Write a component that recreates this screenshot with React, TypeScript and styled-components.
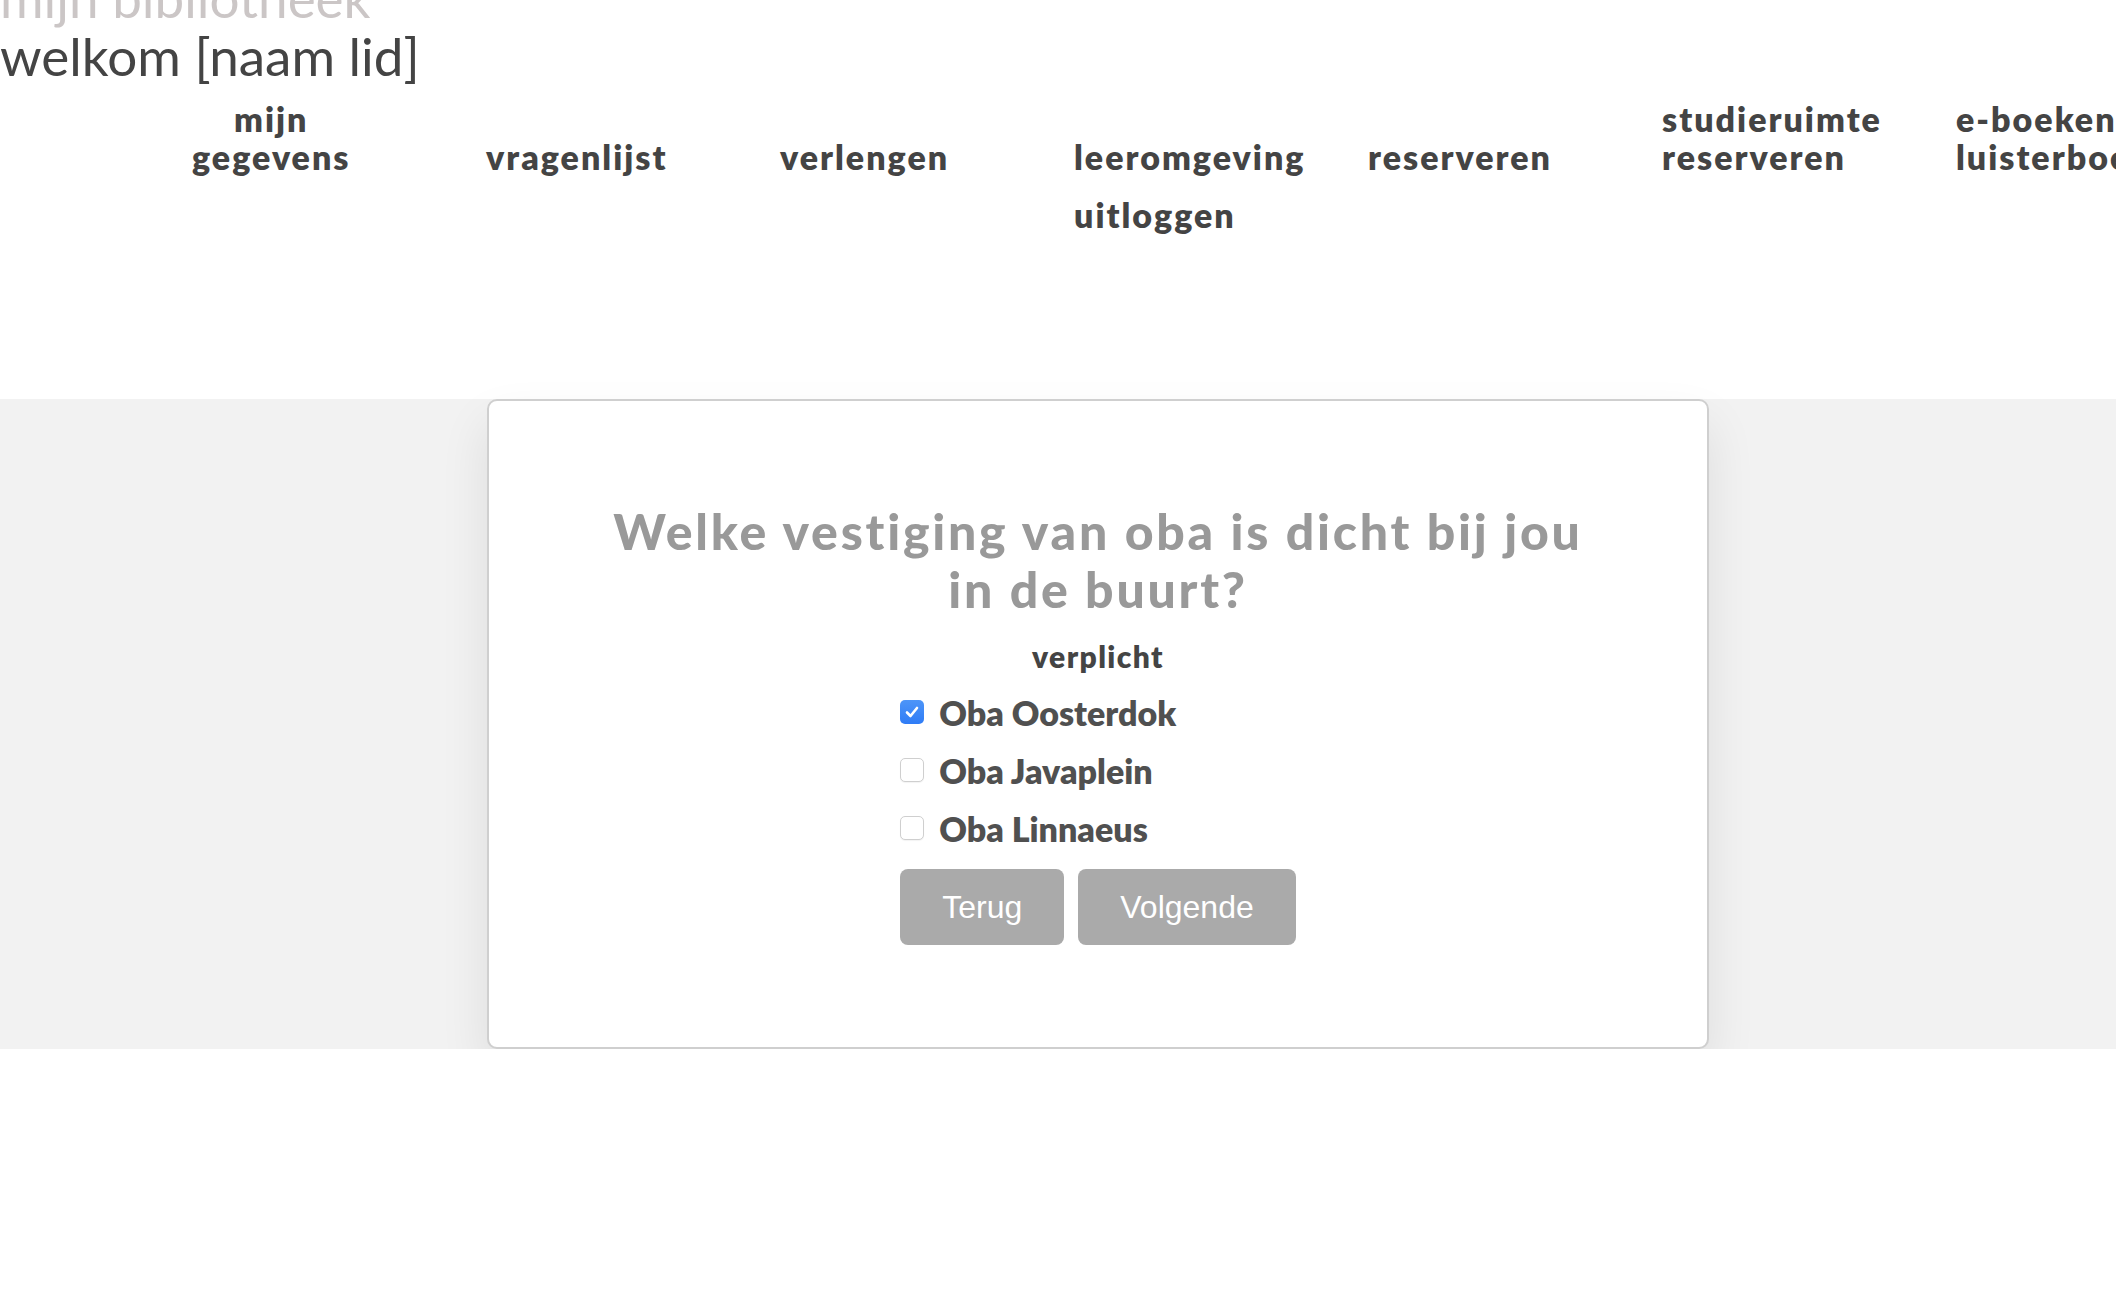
import { createGlobalStyle, styled } from "styled-components";

const GlobalStyle = createGlobalStyle`
  html, body {
    margin: 0;
    padding: 0;
    overflow-x: hidden;
    background: #fff;
  }

  body {
    font-family: Lato, "Noto Sans", sans-serif;
    color: #444;
  }
`;

const Page = styled.div`
  width: 2196px;
`;

const SiteTitle = styled.h1`
  margin: -31px 0 0;
  font-size: 53px;
  font-weight: 400;
  line-height: 58px;
  color: #cbc6c6;
`;

const Welcome = styled.h2`
  margin: 0;
  font-size: 53px;
  font-weight: 400;
  line-height: 58px;
  color: #444;
`;

const Nav = styled.ul`
  display: flex;
  flex-wrap: wrap;
  justify-content: center;
  align-items: flex-end;
  row-gap: 20px;
  width: 2058px;
  margin: 15px 0 0 192px;
  padding: 0;
  list-style: none;
`;

const NavItem = styled.li`
  flex: none;
  width: 294px;
`;

const NavLink = styled.a<{ $center?: boolean }>`
  display: inline-block;
  text-align: ${(p) => (p.$center ? "center" : "left")};
  font-size: 34px;
  font-weight: 800;
  letter-spacing: 2px;
  line-height: 38px;
  color: #444;
  text-decoration: none;
`;

const Band = styled.section`
  display: flex;
  justify-content: center;
  margin-top: 165px;
  background: #f2f2f2;
`;

const Card = styled.div`
  display: flex;
  flex-direction: column;
  align-items: center;
  box-sizing: border-box;
  width: 1222px;
  padding: 101px 0 102px;
  background: #fff;
  border: 2px solid #cfcfcf;
  border-radius: 10px;
  box-shadow: 0 24px 50px rgba(0, 0, 0, 0.09);
`;

const Question = styled.h3`
  max-width: 1010px;
  margin: 0;
  font-size: 50px;
  font-weight: 900;
  letter-spacing: 2.75px;
  line-height: 58px;
  text-align: center;
  color: #999;
`;

const Required = styled.p`
  margin: 18px 0 0;
  font-size: 30px;
  font-weight: 800;
  letter-spacing: 1.4px;
  line-height: 40px;
  color: #444;
`;

const Form = styled.form`
  display: flex;
  flex-direction: column;
  align-items: flex-start;
  margin-top: 7px;
`;

const Option = styled.label`
  display: flex;
  align-items: center;
  gap: 15px;
  height: 58px;
  font-size: 34px;
  font-weight: 800;
  color: #505050;
  cursor: pointer;
`;

const Box = styled.span<{ $checked?: boolean }>`
  display: flex;
  align-items: center;
  justify-content: center;
  box-sizing: border-box;
  width: 24px;
  height: 24px;
  border-radius: 5px;
  border: ${(p) => (p.$checked ? "none" : "1px solid #cfcfcf")};
  background: ${(p) =>
    p.$checked ? "linear-gradient(#4d95f8, #2f7cf6)" : "#fff"};
  box-shadow: ${(p) => (p.$checked ? "none" : "0 1px 1px rgba(0, 0, 0, 0.05)")};
`;

const Buttons = styled.div`
  display: flex;
  gap: 14px;
  margin-top: 12px;
`;

const Button = styled.button`
  height: 76px;
  padding: 0 42px;
  border: none;
  border-radius: 8px;
  background: #aaa;
  color: #fff;
  font-family: "Liberation Sans", Arial, sans-serif;
  font-size: 32px;
`;

const menu = [
  { lines: ["mijn", "gegevens"], center: true },
  { lines: ["vragenlijst"] },
  { lines: ["verlengen"] },
  { lines: ["leeromgeving"] },
  { lines: ["reserveren"] },
  { lines: ["studieruimte", "reserveren"] },
  { lines: ["e-boeken", "luisterboeken"] },
  { lines: ["uitloggen"] },
];

const branches = [
  { name: "Oba Oosterdok", checked: true },
  { name: "Oba Javaplein", checked: false },
  { name: "Oba Linnaeus", checked: false },
];

export default function App() {
  return (
    <Page>
      <GlobalStyle />
      <header>
        <SiteTitle>mijn bibliotheek</SiteTitle>
        <Welcome>welkom [naam lid]</Welcome>
        <nav>
          <Nav>
            {menu.map((item) => (
              <NavItem key={item.lines.join(" ")}>
                <NavLink href="#" $center={item.center}>
                  {item.lines.map((line, i) => (
                    <span key={line}>
                      {i > 0 && <br />}
                      {line}
                    </span>
                  ))}
                </NavLink>
              </NavItem>
            ))}
          </Nav>
        </nav>
      </header>

      <Band>
        <Card>
          <Question>Welke vestiging van oba is dicht bij jou in de buurt?</Question>
          <Required>verplicht</Required>
          <Form onSubmit={(e) => e.preventDefault()}>
            {branches.map((b) => (
              <Option key={b.name}>
                <Box $checked={b.checked}>
                  {b.checked && (
                    <svg width="20" height="20" viewBox="0 0 20 20">
                      <path
                        d="M5 10.5l3.5 3.5 6.5-8"
                        fill="none"
                        stroke="#fff"
                        strokeWidth="2.6"
                        strokeLinecap="round"
                        strokeLinejoin="round"
                      />
                    </svg>
                  )}
                </Box>
                {b.name}
              </Option>
            ))}
            <Buttons>
              <Button type="button">Terug</Button>
              <Button type="submit">Volgende</Button>
            </Buttons>
          </Form>
        </Card>
      </Band>
    </Page>
  );
}
